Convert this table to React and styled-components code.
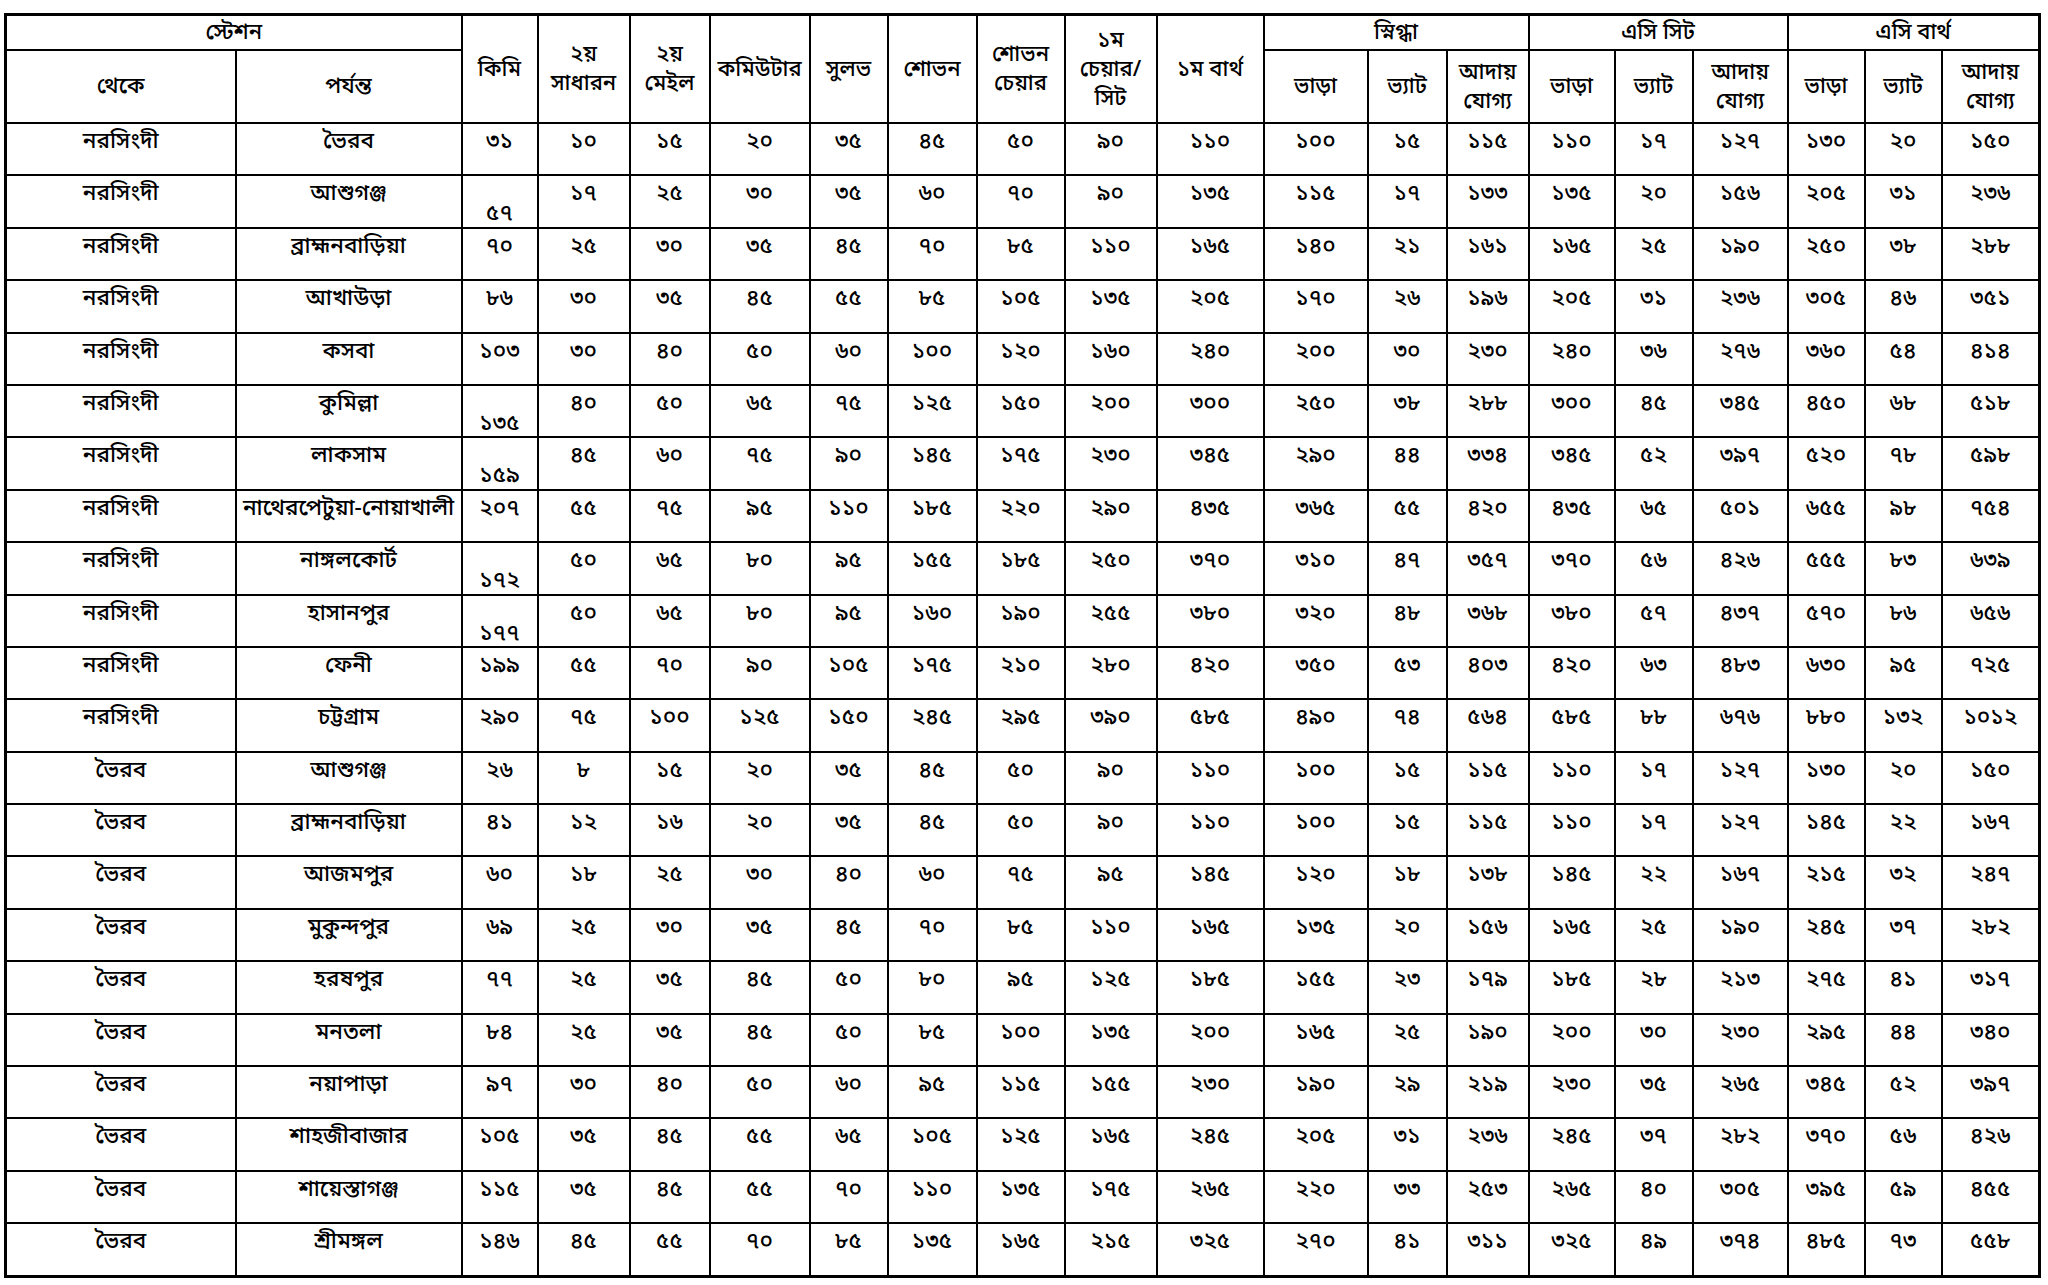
import React from "react";
import styled, { createGlobalStyle } from "styled-components";

const GlobalStyle = createGlobalStyle`
  html, body {
    margin: 0;
    padding: 0;
    background: #ffffff;
  }
  body {
    font-family: "Vrinda", "Noto Sans Bengali", "Lohit Bengali", "FreeSans", "Noto Sans", sans-serif;
    color: #000;
  }
`;

const Page = styled.div`
  padding: 13px 0 0 4px;
`;

const Table = styled.table`
  border-collapse: collapse;
  table-layout: fixed;
  width: 2035px;
  border: 3px solid #000;
`;

const Col = styled.col`
  width: ${(p) => p.$w}px;
`;

const HeadCell = styled.th`
  border: 2px solid #000;
  font-weight: 500;
  font-size: 22px;
  line-height: 29px;
  text-align: center;
  vertical-align: middle;
  padding: 2px 2px 0;
  height: ${(p) => p.$h}px;
  white-space: pre-line;
`;

const Cell = styled.td`
  border: 2px solid #000;
  font-size: 22.5px;
  font-weight: 500;
  line-height: 23px;
  text-align: center;
  vertical-align: top;
  padding: 7px 2px 0;
  height: 43.4px;
  white-space: nowrap;
`;

const Spacer = styled.span`
  display: block;
  height: 20px;
`;

const widths = [230, 226, 76, 92, 80, 100, 78, 89, 88, 92, 107, 104, 79, 82, 86, 78, 95, 77, 77, 98];

const spanHeads = [
  "কিমি",
  "২য়\nসাধারন",
  "২য়\nমেইল",
  "কমিউটার",
  "সুলভ",
  "শোভন",
  "শোভন\nচেয়ার",
  "১ম\nচেয়ার/\nসিট",
  "১ম  বার্থ",
];

const groups = ["স্নিগ্ধা", "এসি  সিট", "এসি  বার্থ"];

const rows = [
  ["নরসিংদী", "ভৈরব", "৩১", "১০", "১৫", "২০", "৩৫", "৪৫", "৫০", "৯০", "১১০", "১০০", "১৫", "১১৫", "১১০", "১৭", "১২৭", "১৩০", "২০", "১৫০"],
  ["নরসিংদী", "আশুগঞ্জ", "^৫৭", "১৭", "২৫", "৩০", "৩৫", "৬০", "৭০", "৯০", "১৩৫", "১১৫", "১৭", "১৩৩", "১৩৫", "২০", "১৫৬", "২০৫", "৩১", "২৩৬"],
  ["নরসিংদী", "ব্রাহ্মনবাড়িয়া", "৭০", "২৫", "৩০", "৩৫", "৪৫", "৭০", "৮৫", "১১০", "১৬৫", "১৪০", "২১", "১৬১", "১৬৫", "২৫", "১৯০", "২৫০", "৩৮", "২৮৮"],
  ["নরসিংদী", "আখাউড়া", "৮৬", "৩০", "৩৫", "৪৫", "৫৫", "৮৫", "১০৫", "১৩৫", "২০৫", "১৭০", "২৬", "১৯৬", "২০৫", "৩১", "২৩৬", "৩০৫", "৪৬", "৩৫১"],
  ["নরসিংদী", "কসবা", "১০৩", "৩০", "৪০", "৫০", "৬০", "১০০", "১২০", "১৬০", "২৪০", "২০০", "৩০", "২৩০", "২৪০", "৩৬", "২৭৬", "৩৬০", "৫৪", "৪১৪"],
  ["নরসিংদী", "কুমিল্লা", "^১৩৫", "৪০", "৫০", "৬৫", "৭৫", "১২৫", "১৫০", "২০০", "৩০০", "২৫০", "৩৮", "২৮৮", "৩০০", "৪৫", "৩৪৫", "৪৫০", "৬৮", "৫১৮"],
  ["নরসিংদী", "লাকসাম", "^১৫৯", "৪৫", "৬০", "৭৫", "৯০", "১৪৫", "১৭৫", "২৩০", "৩৪৫", "২৯০", "৪৪", "৩৩৪", "৩৪৫", "৫২", "৩৯৭", "৫২০", "৭৮", "৫৯৮"],
  ["নরসিংদী", "নাথেরপেটুয়া-নোয়াখালী", "২০৭", "৫৫", "৭৫", "৯৫", "১১০", "১৮৫", "২২০", "২৯০", "৪৩৫", "৩৬৫", "৫৫", "৪২০", "৪৩৫", "৬৫", "৫০১", "৬৫৫", "৯৮", "৭৫৪"],
  ["নরসিংদী", "নাঙ্গলকোর্ট", "^১৭২", "৫০", "৬৫", "৮০", "৯৫", "১৫৫", "১৮৫", "২৫০", "৩৭০", "৩১০", "৪৭", "৩৫৭", "৩৭০", "৫৬", "৪২৬", "৫৫৫", "৮৩", "৬৩৯"],
  ["নরসিংদী", "হাসানপুর", "^১৭৭", "৫০", "৬৫", "৮০", "৯৫", "১৬০", "১৯০", "২৫৫", "৩৮০", "৩২০", "৪৮", "৩৬৮", "৩৮০", "৫৭", "৪৩৭", "৫৭০", "৮৬", "৬৫৬"],
  ["নরসিংদী", "ফেনী", "১৯৯", "৫৫", "৭০", "৯০", "১০৫", "১৭৫", "২১০", "২৮০", "৪২০", "৩৫০", "৫৩", "৪০৩", "৪২০", "৬৩", "৪৮৩", "৬৩০", "৯৫", "৭২৫"],
  ["নরসিংদী", "চট্টগ্রাম", "২৯০", "৭৫", "১০০", "১২৫", "১৫০", "২৪৫", "২৯৫", "৩৯০", "৫৮৫", "৪৯০", "৭৪", "৫৬৪", "৫৮৫", "৮৮", "৬৭৬", "৮৮০", "১৩২", "১০১২"],
  ["ভৈরব", "আশুগঞ্জ", "২৬", "৮", "১৫", "২০", "৩৫", "৪৫", "৫০", "৯০", "১১০", "১০০", "১৫", "১১৫", "১১০", "১৭", "১২৭", "১৩০", "২০", "১৫০"],
  ["ভৈরব", "ব্রাহ্মনবাড়িয়া", "৪১", "১২", "১৬", "২০", "৩৫", "৪৫", "৫০", "৯০", "১১০", "১০০", "১৫", "১১৫", "১১০", "১৭", "১২৭", "১৪৫", "২২", "১৬৭"],
  ["ভৈরব", "আজমপুর", "৬০", "১৮", "২৫", "৩০", "৪০", "৬০", "৭৫", "৯৫", "১৪৫", "১২০", "১৮", "১৩৮", "১৪৫", "২২", "১৬৭", "২১৫", "৩২", "২৪৭"],
  ["ভৈরব", "মুকুন্দপুর", "৬৯", "২৫", "৩০", "৩৫", "৪৫", "৭০", "৮৫", "১১০", "১৬৫", "১৩৫", "২০", "১৫৬", "১৬৫", "২৫", "১৯০", "২৪৫", "৩৭", "২৮২"],
  ["ভৈরব", "হরষপুর", "৭৭", "২৫", "৩৫", "৪৫", "৫০", "৮০", "৯৫", "১২৫", "১৮৫", "১৫৫", "২৩", "১৭৯", "১৮৫", "২৮", "২১৩", "২৭৫", "৪১", "৩১৭"],
  ["ভৈরব", "মনতলা", "৮৪", "২৫", "৩৫", "৪৫", "৫০", "৮৫", "১০০", "১৩৫", "২০০", "১৬৫", "২৫", "১৯০", "২০০", "৩০", "২৩০", "২৯৫", "৪৪", "৩৪০"],
  ["ভৈরব", "নয়াপাড়া", "৯৭", "৩০", "৪০", "৫০", "৬০", "৯৫", "১১৫", "১৫৫", "২৩০", "১৯০", "২৯", "২১৯", "২৩০", "৩৫", "২৬৫", "৩৪৫", "৫২", "৩৯৭"],
  ["ভৈরব", "শাহজীবাজার", "১০৫", "৩৫", "৪৫", "৫৫", "৬৫", "১০৫", "১২৫", "১৬৫", "২৪৫", "২০৫", "৩১", "২৩৬", "২৪৫", "৩৭", "২৮২", "৩৭০", "৫৬", "৪২৬"],
  ["ভৈরব", "শায়েস্তাগঞ্জ", "১১৫", "৩৫", "৪৫", "৫৫", "৭০", "১১০", "১৩৫", "১৭৫", "২৬৫", "২২০", "৩৩", "২৫৩", "২৬৫", "৪০", "৩০৫", "৩৯৫", "৫৯", "৪৫৫"],
  ["ভৈরব", "শ্রীমঙ্গল", "১৪৬", "৪৫", "৫৫", "৭০", "৮৫", "১৩৫", "১৬৫", "২১৫", "৩২৫", "২৭০", "৪১", "৩১১", "৩২৫", "৪৯", "৩৭৪", "৪৮৫", "৭৩", "৫৫৮"],
];

function DataCell({ value }) {
  const low = value.startsWith("^");
  const text = low ? value.slice(1) : value;
  return (
    <Cell>
      {low && <Spacer />}
      {text}
    </Cell>
  );
}

export default function App() {
  return (
    <>
      <GlobalStyle />
      <Page>
        <Table>
          <colgroup>
            {widths.map((w, i) => (
              <Col key={i} $w={w} />
            ))}
          </colgroup>
          <thead>
            <tr>
              <HeadCell colSpan={2} $h={31}>স্টেশন</HeadCell>
              {spanHeads.map((h) => (
                <HeadCell key={h} rowSpan={2}>{h}</HeadCell>
              ))}
              {groups.map((g) => (
                <HeadCell key={g} colSpan={3} $h={31}>{g}</HeadCell>
              ))}
            </tr>
            <tr>
              <HeadCell $h={69}>থেকে</HeadCell>
              <HeadCell $h={69}>পর্যন্ত</HeadCell>
              {groups.map((g) => (
                <React.Fragment key={g}>
                  <HeadCell $h={69}>ভাড়া</HeadCell>
                  <HeadCell $h={69}>ভ্যাট</HeadCell>
                  <HeadCell $h={69}>{"আদায়\nযোগ্য"}</HeadCell>
                </React.Fragment>
              ))}
            </tr>
          </thead>
          <tbody>
            {rows.map((r, i) => (
              <tr key={i}>
                {r.map((v, j) => (
                  <DataCell key={j} value={v} />
                ))}
              </tr>
            ))}
          </tbody>
        </Table>
      </Page>
    </>
  );
}
